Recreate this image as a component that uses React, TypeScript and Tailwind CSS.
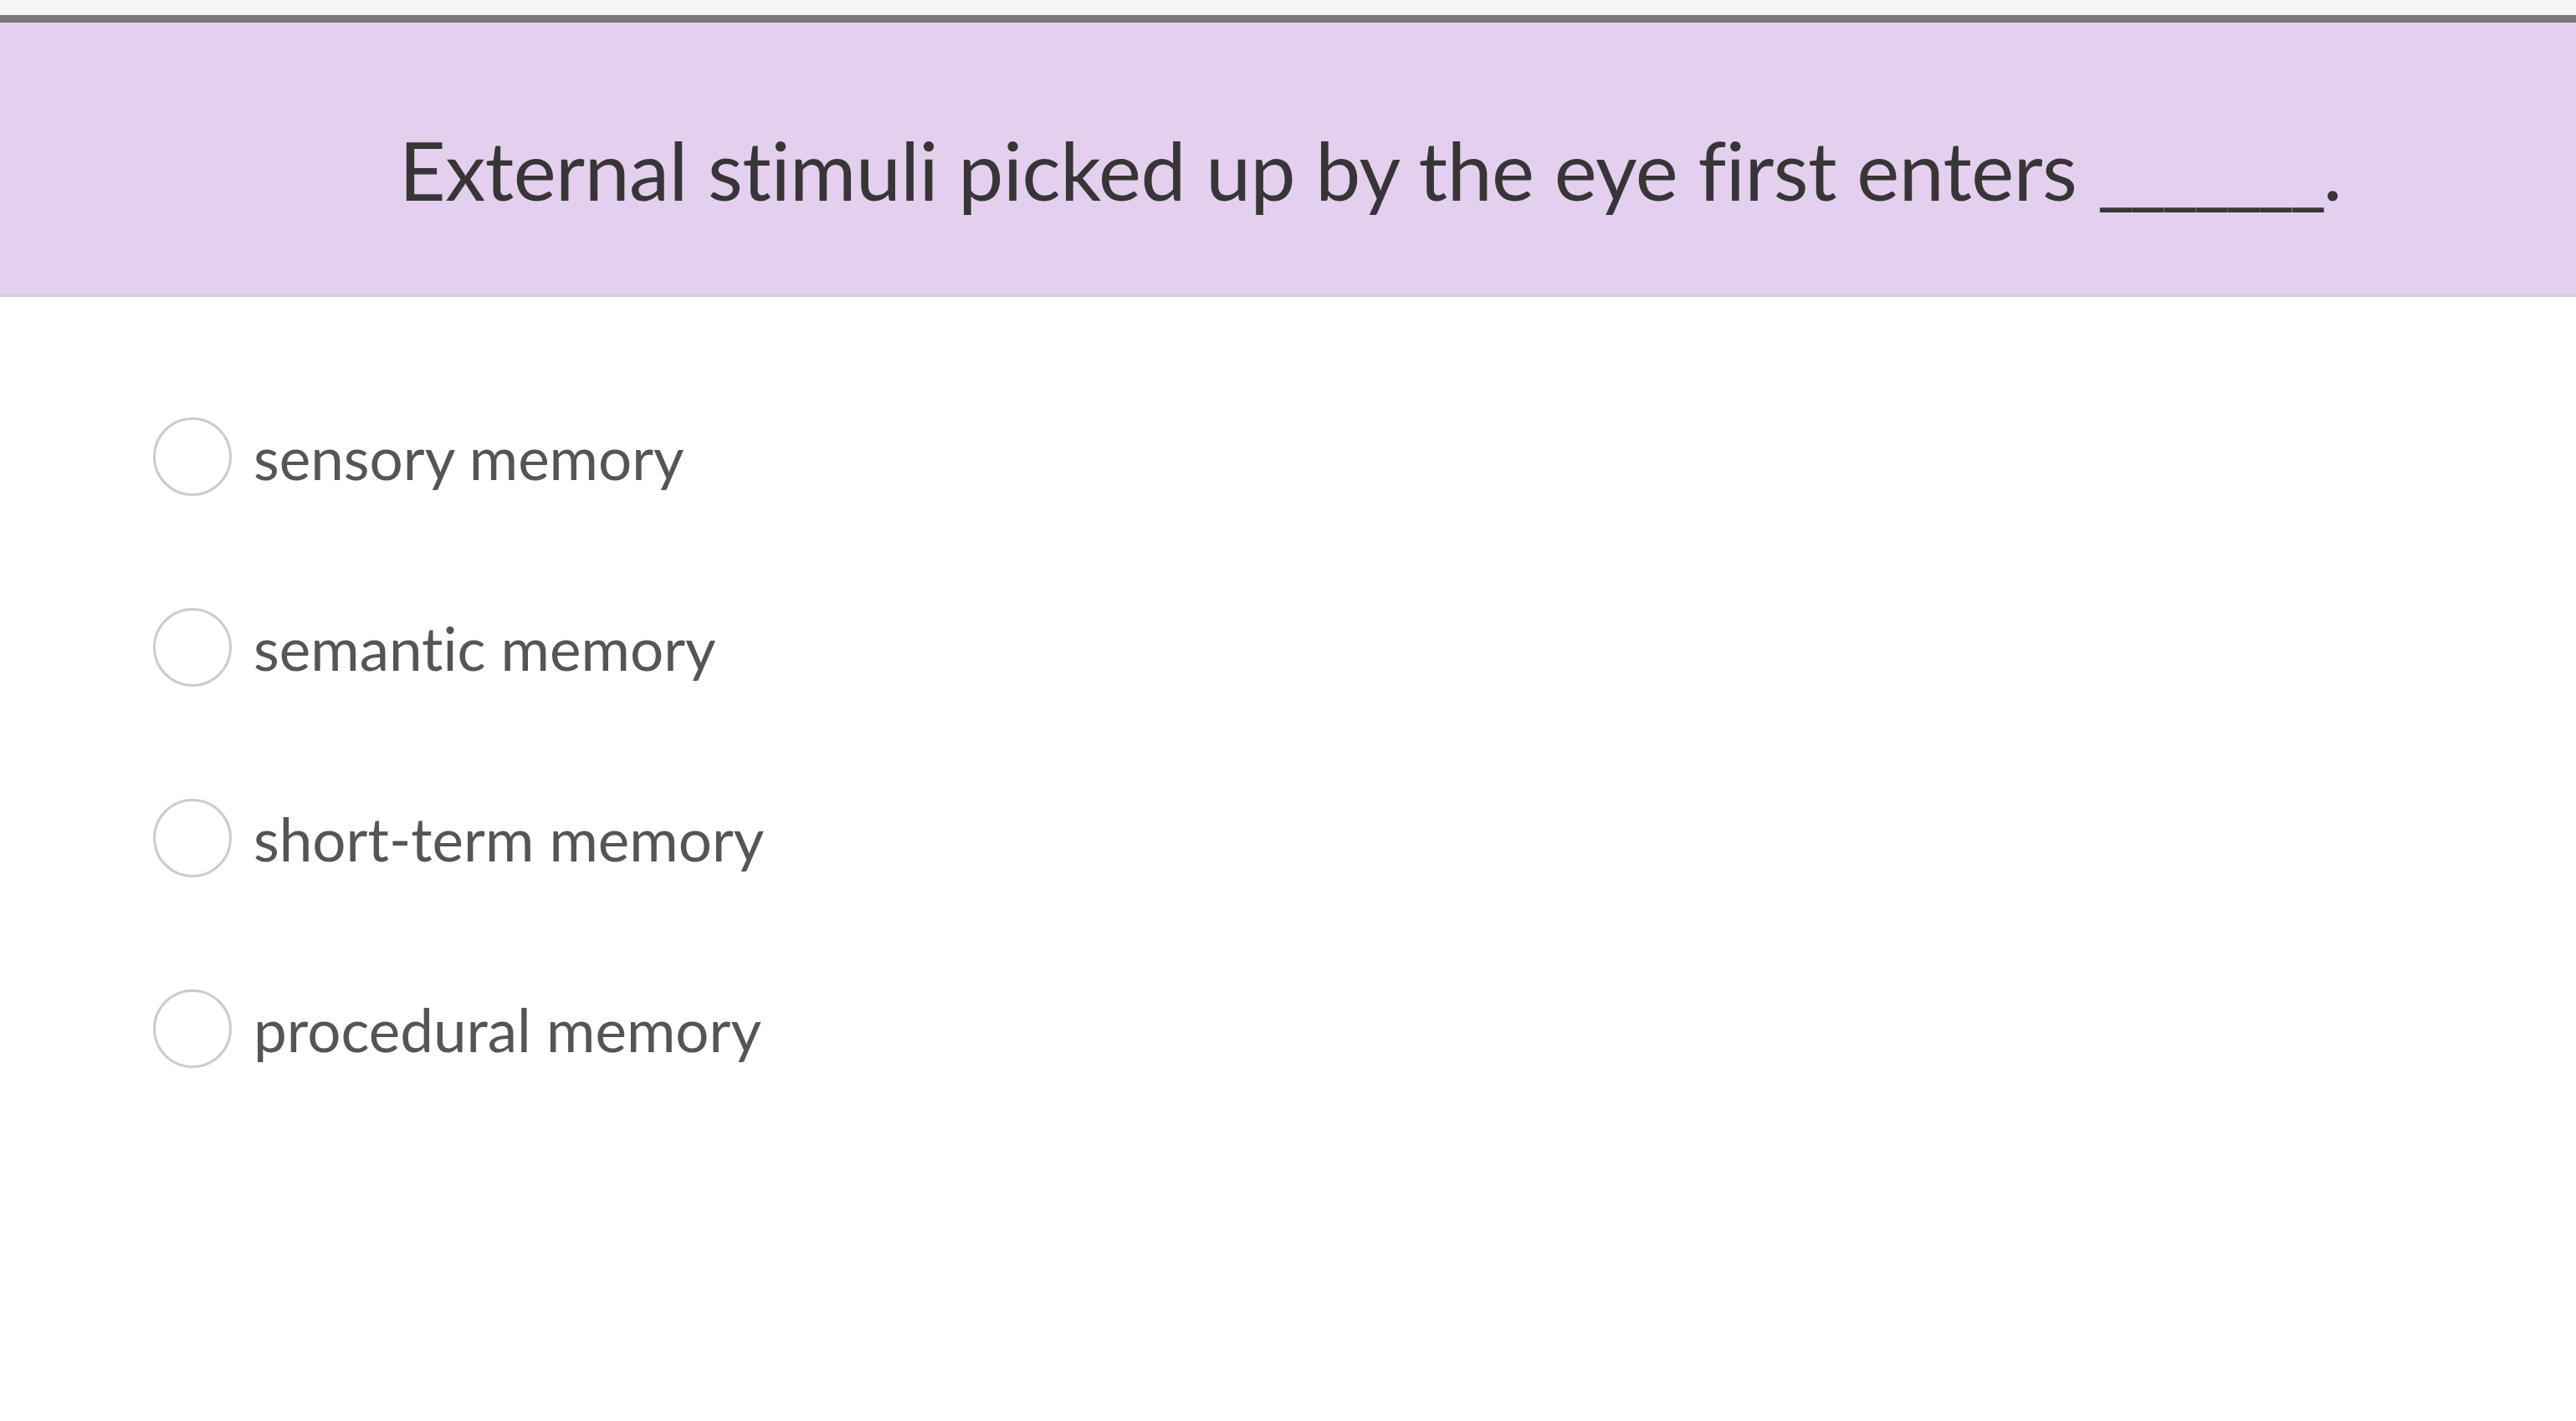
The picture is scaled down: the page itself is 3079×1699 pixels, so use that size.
const options = ['sensory memory', 'semantic memory', 'short-term memory', 'procedural memory'];

export default function App() {
  return (
    <div
      className="min-h-screen w-full bg-white [font-variant-ligatures:none]"
      style={{ fontFamily: 'Lato, "Open Sans", sans-serif' }}
    >
      {/* top strip */}
      <div className="h-[18px] bg-[#f4f5f7]" />
      <div className="h-[9px] bg-[#7a7a7a]" />

      {/* question */}
      <div className="flex h-[328px] items-center border-b-[3px] border-[#d2d0d4] bg-[#e4d0ee] pl-[477px] pt-[28px]">
        <h1 className="text-[96.5px] leading-none text-[#363636] tracking-[-0.5px]">
          External stimuli picked up by the eye first enters{' '}
          <span className="tracking-[-6px]">_______</span>
          <span className="ml-[2px]">.</span>
        </h1>
      </div>

      {/* answers */}
      <div className="flex flex-col pt-[77px]">
        {options.map((o) => (
          <label key={o} className="flex h-[228px] items-center gap-[26px] pl-[183px]">
            <span className="h-[94px] w-[94px] shrink-0 rounded-full border-[3px] border-[#cccccc] bg-white" />
            <span className="text-[71px] leading-none text-[#555555]">{o}</span>
          </label>
        ))}
      </div>
    </div>
  );
}
